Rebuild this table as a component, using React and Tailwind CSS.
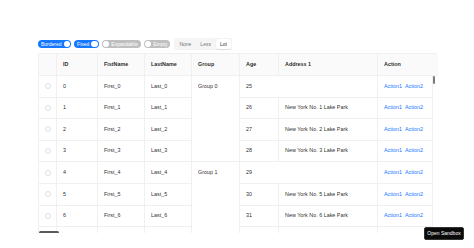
import React from "react";

const font = { fontFamily: '"Liberation Sans", Arial, sans-serif' };

function Switch({ on, label }) {
  if (on) {
    return (
      <div className="flex h-[8.5px] items-center rounded-full bg-[#1677ff] pl-[3px] pr-[1px]">
        <span className="text-[5px] leading-none text-white whitespace-nowrap">{label}</span>
        <span className="ml-[2px] h-[6.5px] w-[6.5px] rounded-full bg-white" />
      </div>
    );
  }
  return (
    <div className="flex h-[8.5px] items-center rounded-full bg-[#bfbfbf] pl-[1px] pr-[3px]">
      <span className="mr-[2px] h-[6.5px] w-[6.5px] rounded-full bg-white" />
      <span className="text-[5px] leading-none text-white whitespace-nowrap">{label}</span>
    </div>
  );
}

const rows = Array.from({ length: 8 }, (_, i) => i);

export default function App() {
  const cell = "flex items-center border-b border-r border-[#f0f0f0] px-[6px] text-[5.4px] leading-none text-[#000000e0] whitespace-nowrap";
  const head = "flex items-center border-b border-r border-[#f0f0f0] bg-[#fafafa] px-[6px] text-[5.4px] font-bold leading-none text-[#000000e0] whitespace-nowrap";
  return (
    <div style={font} className="relative h-[248px] w-[474px] overflow-hidden bg-white">
      <div className="flex flex-col pl-[38px] pt-[38px]">
        <div className="flex h-[12px] items-center gap-[3px]">
          <Switch on label="Bordered" />
          <Switch on label="Fixed" />
          <Switch label="Expandable" />
          <Switch label="Empty" />
          <div className="ml-[1px] flex h-[12px] items-center rounded-[2px] bg-[#f5f5f5] p-[1px] text-[5px] leading-none">
            <span className="px-[4px] text-[#00000099]">None</span>
            <span className="ml-[1px] px-[4px] text-[#00000099]">Less</span>
            <span className="ml-[1px] flex h-[10px] items-center rounded-[2px] bg-white px-[4px] text-[#000000e0] shadow-[0_0.5px_1px_rgba(0,0,0,0.1)]">Lot</span>
          </div>
        </div>

        <div className="mt-[3px] w-[399px] border-l border-t border-[#f0f0f0]">
          <div className="grid h-[22px] grid-cols-[18px_41px_47px_47px_48px_39px_99px_60px]">
            <div className={head} />
            <div className={head}>ID</div>
            <div className={head}>FistName</div>
            <div className={head}>LastName</div>
            <div className={head}>Group</div>
            <div className={head}>Age</div>
            <div className={head}>Address 1</div>
            <div className={head + " border-r-0"}>Action</div>
          </div>
          <div className="relative h-[157px] overflow-hidden">
            <div className="grid grid-cols-[18px_41px_47px_47px_48px_39px_99px_55px_5px] auto-rows-[21.6px]">
              {rows.map((i) => {
                const show = i < 7;
                return (
                  <React.Fragment key={i}>
                    <div className="flex items-center justify-center border-b border-r border-[#f0f0f0]">
                      {show && <span className="h-[6px] w-[6px] rounded-full border border-[#e0e0e0] bg-white" />}
                    </div>
                    <div className={cell}>{show ? i : ""}</div>
                    <div className={cell}>{show ? `First_${i}` : ""}</div>
                    <div className={cell}>{show ? `Last_${i}` : ""}</div>
                    {i % 4 === 0 && (
                      <div className="row-span-4 border-b border-r border-[#f0f0f0] px-[6px] text-[5.4px] leading-none text-[#000000e0]">
                        <div className="flex h-[21.6px] items-center">Group {i / 4}</div>
                      </div>
                    )}
                    {i % 4 === 0 ? (
                      <div className={cell + " col-span-2"}>{25 + i}</div>
                    ) : (
                      <>
                        <div className={cell}>{show ? 25 + i : ""}</div>
                        <div className={cell}>{show ? `New York No. ${i} Lake Park` : ""}</div>
                      </>
                    )}
                    <div className={cell + " gap-[3px] text-[#1677ff]"}>
                      {show && (
                        <>
                          <span>Action1</span>
                          <span>Action2</span>
                        </>
                      )}
                    </div>
                    <div />
                  </React.Fragment>
                );
              })}
            </div>
            <div className="absolute right-[2px] top-0 h-[8px] w-[2.5px] rounded-full bg-[#7a7a7a]" />
            <div className="absolute left-0 top-[155px] h-[2.5px] w-[20px] rounded-full bg-[#5a5a5a]" />
          </div>
        </div>
      </div>

      <div className="absolute bottom-[8px] right-[10px] flex h-[13px] w-[40px] items-center justify-center rounded-[2px] border border-[#333] bg-[#0a0a0a] text-[5px] leading-none text-white">
        Open Sandbox
      </div>
    </div>
  );
}
